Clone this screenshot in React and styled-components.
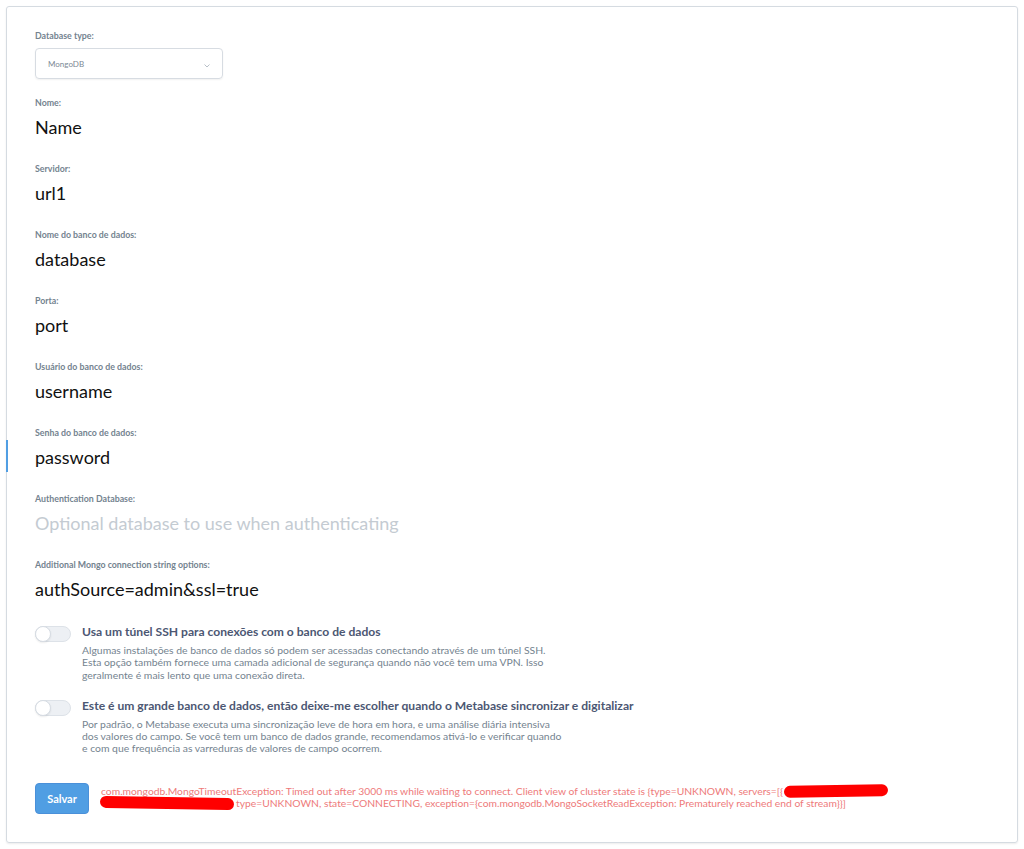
import React from "react";
import styled, { createGlobalStyle } from "styled-components";

const Global = createGlobalStyle`
  html, body { margin: 0; padding: 0; background: #fff; }
  body { font-family: Lato, "Noto Sans", sans-serif; -webkit-font-smoothing: antialiased; }
  * { box-sizing: border-box; }
`;

const Page = styled.div`
  padding: 6px;
`;

const Card = styled.div`
  width: 1012px;
  height: 837px;
  border: 1px solid #d5dbe1;
  border-radius: 3px;
  box-shadow: 0 1px 2px rgba(0, 0, 0, 0.08);
  padding: 23px 28px 28px 28px;
  display: flex;
  flex-direction: column;
`;

const Field = styled.div`
  position: relative;
  display: flex;
  flex-direction: column;
  margin-bottom: ${(p) => p.$mb ?? 24}px;
  ${(p) =>
    p.$focused &&
    `
    &::before {
      content: "";
      position: absolute;
      left: -29px;
      top: 13px;
      width: 2px;
      height: 32px;
      background: #509ee3;
    }
  `}
`;

const Label = styled.label`
  font-size: 8.8px;
  line-height: 12px;
  font-weight: 700;
  color: #74838f;
  margin-bottom: ${(p) => p.$mb ?? 6}px;
`;

const Value = styled.div`
  font-size: 18px;
  line-height: 24px;
  color: ${(p) => (p.$placeholder ? "#c4cbd2" : "#111")};
`;

const Select = styled.div`
  width: 188px;
  height: 31px;
  border: 1px solid #d7dce2;
  border-radius: 4px;
  box-shadow: 0 1px 2px rgba(0, 0, 0, 0.06);
  display: flex;
  align-items: center;
  justify-content: space-between;
  padding: 0 12px 0 12px;
  font-size: 8px;
  color: #7b8894;
`;

const Chevron = styled.svg`
  width: 6px;
  height: 4px;
  margin-top: 4px;
`;

const ToggleRow = styled.div`
  display: flex;
  gap: 11px;
  margin-top: ${(p) => p.$mt}px;
`;

const Toggle = styled.div`
  flex: none;
  width: 36px;
  height: 16px;
  margin-top: 2px;
  border-radius: 8px;
  background: #edf0f4;
  border: 1px solid #dde2e8;
  display: flex;
  align-items: center;
`;

const Knob = styled.div`
  width: 16px;
  height: 16px;
  margin-left: -1px;
  border-radius: 50%;
  background: #fff;
  border: 1px solid #d6dce3;
  box-shadow: 0 1px 2px rgba(0, 0, 0, 0.08);
`;

const ToggleText = styled.div`
  display: flex;
  flex-direction: column;
`;

const ToggleTitle = styled.div`
  font-size: 12.1px;
  line-height: 16px;
  font-weight: 700;
  color: #4c5773;
  margin-bottom: 4px;
`;

const ToggleDesc = styled.div`
  font-size: 10.4px;
  line-height: 12.3px;
  color: #74838f;
  width: 481px;
`;

const Footer = styled.div`
  display: flex;
  align-items: flex-start;
  gap: 12px;
  margin-top: 28px;
`;

const Button = styled.button`
  flex: none;
  width: 54px;
  height: 31px;
  border: 1px solid #4a90d9;
  border-radius: 4px;
  background: #509ee3;
  color: #fff;
  font-family: Lato, sans-serif;
  font-weight: 700;
  font-size: 11px;
  padding: 0;
`;

const ErrorBox = styled.div`
  padding-top: 2px;
  font-size: 10.3px;
  line-height: 12px;
  color: #ee7a7a;
`;

const ErrorLine = styled.div`
  white-space: nowrap;
  display: flex;
  align-items: center;
`;

const Redact = styled.span`
  display: inline-block;
  width: ${(p) => p.$w}px;
  height: 12px;
  background: #ff0000;
  border-radius: 6px;
  margin: ${(p) => p.$m};
  transform: rotate(${(p) => p.$r ?? 0}deg);
`;

const fields = [
  { label: "Nome:", value: "Name" },
  { label: "Servidor:", value: "url1" },
  { label: "Nome do banco de dados:", value: "database" },
  { label: "Porta:", value: "port" },
  { label: "Usuário do banco de dados:", value: "username" },
  { label: "Senha do banco de dados:", value: "password", focused: true },
  { label: "Authentication Database:", value: "Optional database to use when authenticating", placeholder: true },
  { label: "Additional Mongo connection string options:", value: "authSource=admin&ssl=true" },
];

export default function App() {
  return (
    <>
      <Global />
      <Page>
        <Card>
          <Field $mb={18}>
            <Label $mb={6}>Database type:</Label>
            <Select>
              <span>MongoDB</span>
              <Chevron viewBox="0 0 6 4">
                <path d="M0.5 0.5 L3 3 L5.5 0.5" fill="none" stroke="#b8c0c8" strokeWidth="1" />
              </Chevron>
            </Select>
          </Field>
          {fields.map((f, i) => (
            <Field key={f.label} $focused={f.focused} $mb={i === fields.length - 1 ? 0 : 24}>
              <Label>{f.label}</Label>
              <Value $placeholder={f.placeholder}>{f.value}</Value>
            </Field>
          ))}
          <ToggleRow $mt={23}>
            <Toggle>
              <Knob />
            </Toggle>
            <ToggleText>
              <ToggleTitle>Usa um túnel SSH para conexões com o banco de dados</ToggleTitle>
              <ToggleDesc>
                Algumas instalações de banco de dados só podem ser acessadas conectando através de um túnel SSH. Esta opção também fornece uma camada adicional de segurança quando não você tem uma VPN. Isso geralmente é mais lento que uma conexão direta.
              </ToggleDesc>
            </ToggleText>
          </ToggleRow>
          <ToggleRow $mt={17}>
            <Toggle>
              <Knob />
            </Toggle>
            <ToggleText>
              <ToggleTitle>
                Este é um grande banco de dados, então deixe-me escolher quando o Metabase sincronizar e digitalizar
              </ToggleTitle>
              <ToggleDesc>
                Por padrão, o Metabase executa uma sincronização leve de hora em hora, e uma análise diária intensiva dos valores do campo. Se você tem um banco de dados grande, recomendamos ativá-lo e verificar quando e com que frequência as varreduras de valores de campo ocorrem.
              </ToggleDesc>
            </ToggleText>
          </ToggleRow>
          <Footer>
            <Button>Salvar</Button>
            <ErrorBox>
              <ErrorLine>
                com.mongodb.MongoTimeoutException: Timed out after 3000 ms while waiting to connect. Client view of cluster state is {"{"}type=UNKNOWN, servers=[{"{"}
                <Redact $w={104} $m="0 0 0 1px" $r={-1} />
              </ErrorLine>
              <ErrorLine>
                <Redact $w={134} $m="0 2px 0 -1px" $r={1} />
                type=UNKNOWN, state=CONNECTING, exception={"{"}com.mongodb.MongoSocketReadException: Prematurely reached end of stream{"}}"}]
              </ErrorLine>
            </ErrorBox>
          </Footer>
        </Card>
      </Page>
    </>
  );
}
